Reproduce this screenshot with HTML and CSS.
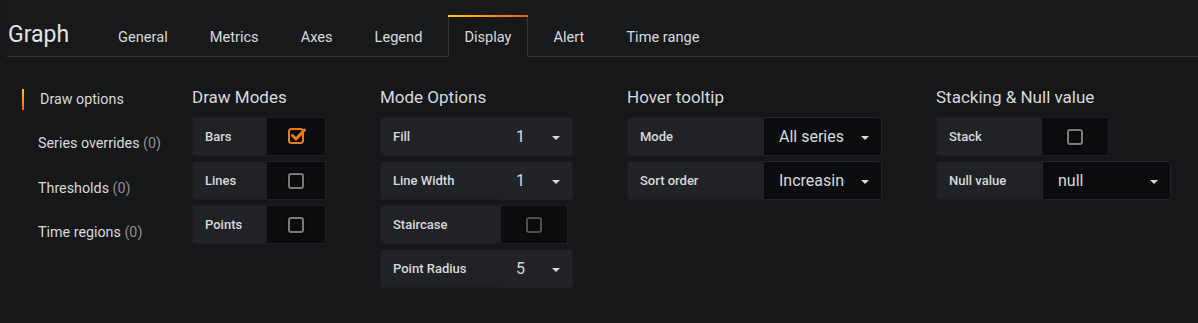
FILE: index.html
```html
<!DOCTYPE html>
<html lang="en">
<head>
  <meta charset="UTF-8">
  <meta name="viewport" content="width=device-width, initial-scale=1.0">
  <title>Graph - Display</title>
  <link rel="stylesheet" href="styles.css">
</head>
<body>
  <div class="header">
    <div class="title">Graph</div>
    <div class="tabs">
      <div class="tab">General</div>
      <div class="tab">Metrics</div>
      <div class="tab">Axes</div>
      <div class="tab">Legend</div>
      <div class="tab active">Display</div>
      <div class="tab">Alert</div>
      <div class="tab">Time range</div>
    </div>
  </div>

  <div class="main">
    <div class="sidebar">
      <div class="side-item active">Draw options</div>
      <div class="side-item">Series overrides <span class="count">(0)</span></div>
      <div class="side-item">Thresholds <span class="count">(0)</span></div>
      <div class="side-item">Time regions <span class="count">(0)</span></div>
    </div>

    <div class="sections">
      <div class="section">
        <h5>Draw Modes</h5>
        <div class="row">
          <div class="label w74">Bars</div>
          <div class="check-cell w60">
            <svg class="checked" width="20" height="20" viewBox="0 0 20 20">
              <rect x="2" y="3" width="14" height="14" rx="2.5" fill="none" stroke="#eb7b18" stroke-width="2"/>
              <path d="M5.5 9.5 L9 13 L17.5 4" fill="none" stroke="#eb7b18" stroke-width="3" stroke-linecap="round" stroke-linejoin="round"/>
            </svg>
          </div>
        </div>
        <div class="row">
          <div class="label w74">Lines</div>
          <div class="check-cell w60"><span class="box"></span></div>
        </div>
        <div class="row">
          <div class="label w74">Points</div>
          <div class="check-cell w60"><span class="box"></span></div>
        </div>
      </div>

      <div class="section">
        <h5>Mode Options</h5>
        <div class="row">
          <div class="label w120">Fill</div>
          <div class="select soft w73"><span class="val">1</span><span class="caret"></span></div>
        </div>
        <div class="row">
          <div class="label w120">Line Width</div>
          <div class="select soft w73"><span class="val">1</span><span class="caret"></span></div>
        </div>
        <div class="row">
          <div class="label w120">Staircase</div>
          <div class="check-cell w68"><span class="box dim"></span></div>
        </div>
        <div class="row">
          <div class="label w120">Point Radius</div>
          <div class="select soft w73"><span class="val">5</span><span class="caret"></span></div>
        </div>
      </div>

      <div class="section">
        <h5>Hover tooltip</h5>
        <div class="row">
          <div class="label w136">Mode</div>
          <div class="select w119"><span class="val">All series</span><span class="caret"></span></div>
        </div>
        <div class="row">
          <div class="label w136">Sort order</div>
          <div class="select w119"><span class="val">Increasing</span><span class="caret"></span></div>
        </div>
      </div>

      <div class="section">
        <h5>Stacking &amp; Null value</h5>
        <div class="row">
          <div class="label w105">Stack</div>
          <div class="check-cell w68"><span class="box"></span></div>
        </div>
        <div class="row">
          <div class="label w106">Null value</div>
          <div class="select w129"><span class="val">null</span><span class="caret"></span></div>
        </div>
      </div>
    </div>
  </div>
</body>
</html>
```

FILE: styles.css
```css
*{
  margin:0;
  padding:0;
  box-sizing:border-box;
}
body{
  background-color:#161719;
  color:#d8d9da;
  font-family:Roboto, "Noto Sans", sans-serif;
  width:1198px;
  height:323px;
  overflow:hidden;
}

/* top bar */
.header{
  display:flex;
  align-items:flex-end;
  height:57px;
  margin-left:7px;
  padding-left:1px;
  border-bottom:1px solid #333436;
  background-color:#18191b;
}
.title{
  font-size:23px;
  line-height:42px;
  margin-right:33px;
  color:#e3e4e5;
}
.tabs{
  display:flex;
  gap:10px;
}
.tab{
  height:42px;
  line-height:40px;
  padding:0 15px;
  font-size:14.6px;
  border:1px solid transparent;
  border-top-width:2px;
  margin-bottom:-1px;
}
.tab.active{
  border-color:#333436;
  border-bottom-color:#161719;
  background-color:#161719;
  position:relative;
}
.tab.active::before{
  content:"";
  position:absolute;
  left:-1px;
  right:-1px;
  top:-2px;
  height:2px;
  background:linear-gradient(90deg,#ffcd0a,#f05a28);
}

/* body */
.main{
  display:flex;
  padding:30px 0 0 22px;
}
.sidebar{
  width:170px;
  padding-top:2px;
}
.side-item{
  font-size:14.3px;
  line-height:21px;
  padding-left:16px;
  margin-bottom:23.4px;
  white-space:nowrap;
}
.side-item.active{
  border-left:2px solid;
  border-image:linear-gradient(#ffcd0a,#f05a28) 1;
}
.count{
  color:#8e8e8e;
}

.sections{
  display:flex;
  gap:54px;
}
h5{
  font-size:17px;
  font-weight:400;
  line-height:20px;
  margin-bottom:10px;
}
.row{
  display:flex;
  height:39px;
  margin-bottom:5px;
}
.label{
  background-color:#202226;
  border-radius:3px 0 0 3px;
  font-size:13px;
  font-weight:500;
  padding-left:12px;
  display:flex;
  align-items:center;
  border:1px solid #1c1d20;
  border-right:none;
}
.check-cell{
  background-color:#0b0c0e;
  border:1px solid #1f2023;
  display:flex;
  align-items:center;
  justify-content:center;
}
.box{
  width:16px;
  height:16px;
  border:2px solid #7a7a7a;
  border-radius:3px;
  box-shadow:0 0 3px rgba(0,0,0,0.8);
}
.box.dim{
  border-color:#4f4f4f;
}
.checked{
  margin-left:2px;
  margin-bottom:1px;
}
.select{
  background-color:#0b0c0e;
  border:1px solid #242528;
  border-radius:0 3px 3px 0;
  display:flex;
  align-items:center;
  padding-left:15px;
  font-size:16px;
  position:relative;
}
.select.soft{
  background-color:#222327;
  border-color:#1e1f22;
}
.val{
  white-space:nowrap;
  overflow:hidden;
  flex:1;
  margin-right:36px;
}
.caret{
  position:absolute;
  right:12px;
  top:18px;
  border-left:4px solid transparent;
  border-right:4px solid transparent;
  border-top:4px solid #d8d9da;
}

.w60{ width:60px; }
.w68{ width:68px; }
.w73{ width:73px; }
.w74{ width:74px; }
.w105{ width:105px; }
.w106{ width:106px; }
.w119{ width:119px; }
.w120{ width:120px; }
.w129{ width:129px; }
.w136{ width:136px; }
```
